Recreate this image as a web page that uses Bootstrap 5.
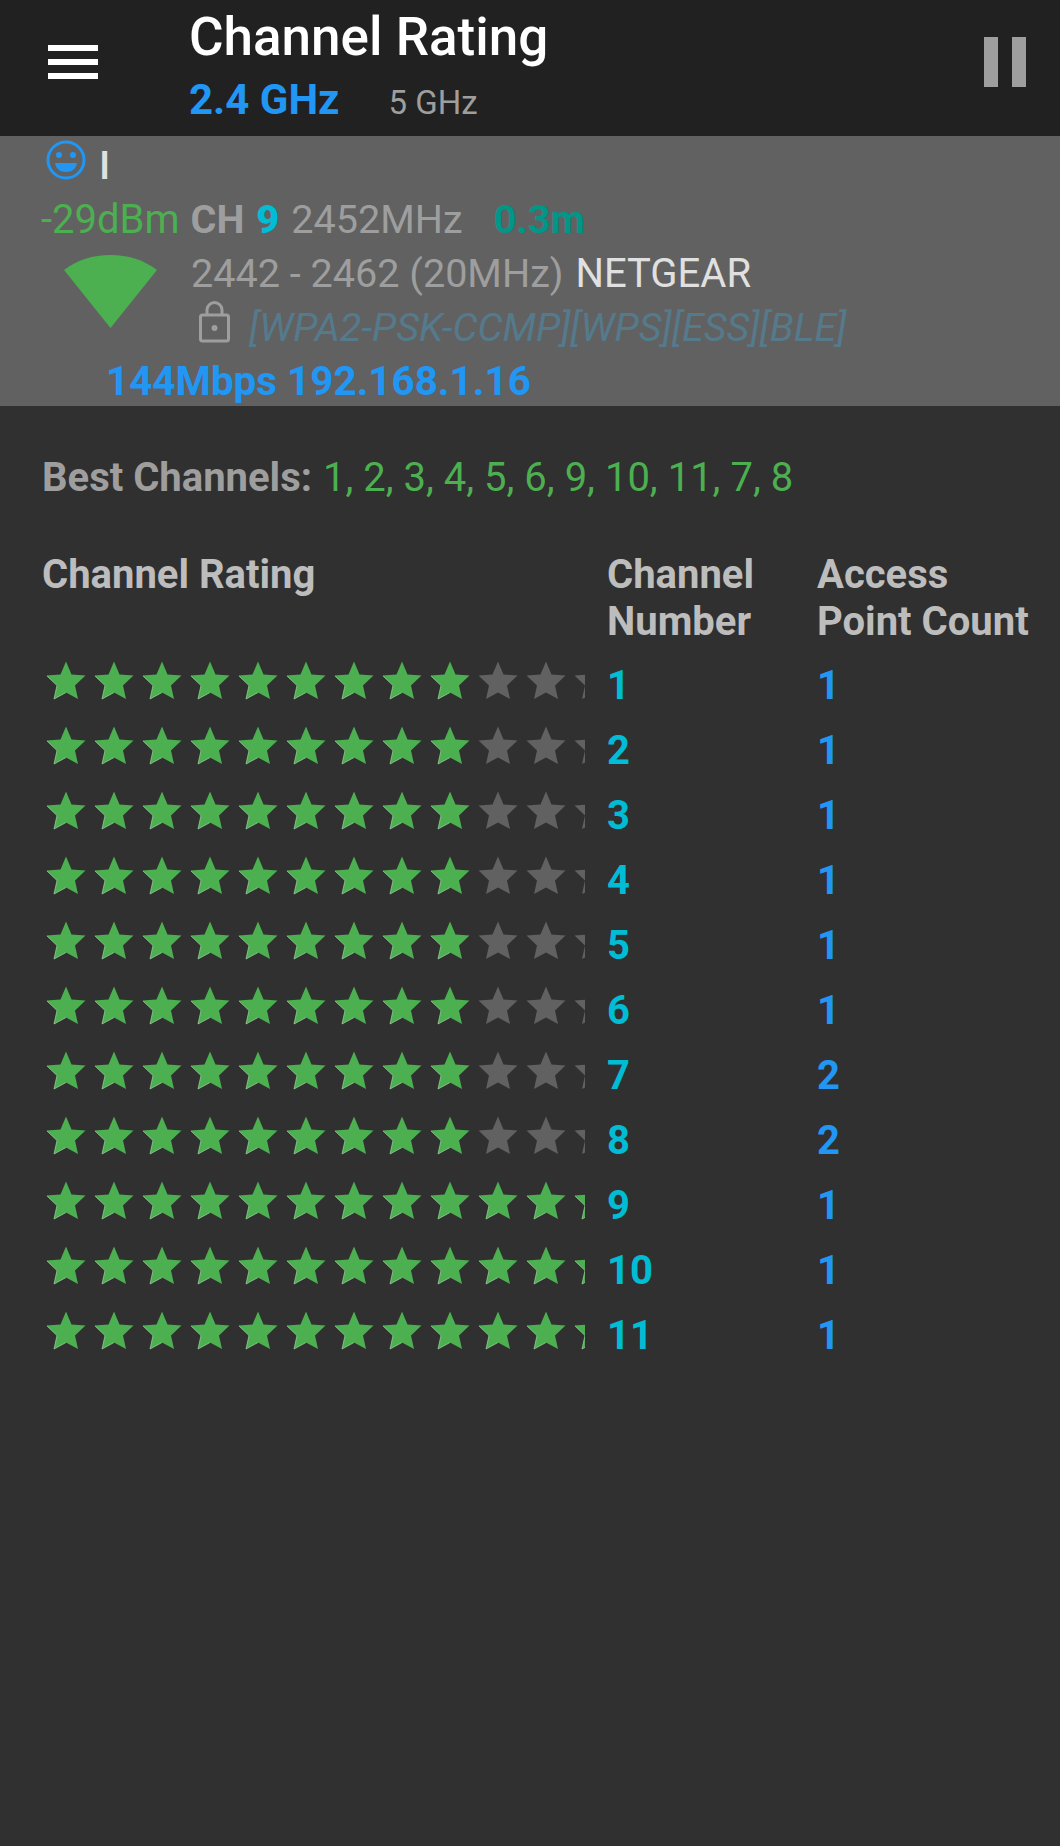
<!DOCTYPE html>
<html lang="en">
<head>
  <meta charset="UTF-8">
  <meta name="viewport" content="width=device-width, initial-scale=1.0">
  <title>Channel Rating</title>
  <link rel="stylesheet" href="https://cdn.jsdelivr.net/npm/bootstrap@5.3.0/dist/css/bootstrap.min.css">
  <style>
    body {
      background-color: #303030;
      font-family: Roboto, "Liberation Sans", sans-serif;
      font-size: 40px;
      line-height: 47px;
      min-height: 1846px;
    }
    .app-bar {
      background-color: #212121;
      height: 136px;
      padding: 0 34px 0 48px;
    }
    .burger { width: 50px; height: 34px; margin: -12px 91px 0 0; }
    .burger span { display: block; height: 6px; background-color: #fff; }
    .title-box { margin-top: 1px; }
    .app-title { color: #fff; font-size: 53px; font-weight: 500; line-height: 72px; }
    .tab-on { color: #2196f3; font-size: 42px; font-weight: 700; line-height: 54px; margin-right: 49px; }
    .tab-off { color: #9e9e9e; font-size: 33px; line-height: 54px; }
    .pause-btn { width: 42px; height: 50px; margin-top: -12px; }
    .pause-btn span { width: 14px; background-color: #9e9e9e; }
    .wifi-panel {
      background-color: #616161;
      height: 270px;
      padding: 3px 0 0 41px;
      color: #9e9e9e;
      font-size: 39.6px;
      line-height: 54px;
    }
    .name-row { height: 54px; padding-left: 4px; }
    .name-row svg { width: 42px; height: 42px; margin-right: 12px; }
    .ssid { color: #e0e0e0; font-weight: 500; }
    .level { color: #4caf50; font-size: 40px; margin-right: 11px; }
    .channel { font-weight: 700; margin-right: 12px; }
    .channel b { color: #00bcd4; margin-left: 2px; }
    .dist { color: #009688; font-weight: 700; margin-left: 31px; }
    .wedge-col { width: 150px; padding-left: 23px; }
    .wedge-col svg { width: 93px; height: 74px; margin-top: 8px; }
    .bssid { color: #e0e0e0; font-size: 40px; margin-left: 2px; }
    .caps { color: #557a8c; font-style: italic; }
    .lock-icon { width: 34px; height: 44px; margin: 0 18px 0 6px; }
    .speed { color: #2196f3; font-size: 40.4px; font-weight: 700; padding-left: 65px; }
    .best { color: #9e9e9e; font-weight: 700; padding: 48px 0 0 42px; }
    .best span { color: #4caf50; font-weight: 400; margin-left: 11px; }
    .rate-wrap { padding: 50px 0 0 42px; }
    .col-rate { width: 565px; flex: none; }
    .col-num { width: 210px; flex: none; }
    .rate-head { color: #bdbdbd; font-weight: 700; }
    .rate-row { height: 65px; }
    .stars { width: 539px; height: 42px; overflow: hidden; flex-wrap: nowrap; gap: 8px; margin: 0 0 10px 4px; }
    .stars svg { width: 40px; height: 40px; flex: none; }
    .star-on { fill: #4caf50; stroke: #a5d6a7; }
    .star-off { fill: #616161; stroke: none; }
    .star-face { stroke: none; }
    .star-edge { fill: none; stroke-width: .7; }
    .num { color: #00bcd4; font-weight: 700; }
    .cnt { color: #2196f3; font-weight: 700; }
  </style>
</head>
<body>
  <svg width="0" height="0" class="d-block">
    <defs>
      <symbol id="star" viewBox="0 0 40 40">
        <polygon class="star-face" points="20,1.500 25.500,14.500 39.500,15.500 29,25.500 32,39 20,32.500 8,39 11,25.500 .5,15.500 14.500,14.500"/>
        <polyline class="star-edge" points="1,16 11,25.500 8,39 20,32.500"/>
      </symbol>
    </defs>
  </svg>

  <div class="app-bar d-flex align-items-center">
    <div class="burger d-flex flex-column justify-content-between">
      <span></span><span></span><span></span>
    </div>
    <div class="title-box flex-grow-1 align-self-start">
      <div class="app-title">Channel Rating</div>
      <div class="d-flex align-items-baseline"><span class="tab-on">2.4 GHz</span><span class="tab-off">5 GHz</span></div>
    </div>
    <div class="pause-btn d-flex justify-content-between"><span></span><span></span></div>
  </div>

  <div class="wifi-panel">
    <div class="name-row d-flex">
      <svg viewBox="0 0 42 42">
        <circle cx="21" cy="21" r="18" fill="none" stroke="#2196f3" stroke-width="3"/>
        <circle cx="14" cy="16" r="3" fill="#2196f3"/>
        <circle cx="28" cy="16" r="3" fill="#2196f3"/>
        <path d="M10 24h22c-1 6-5 9-11 9s-10-3-11-9z" fill="#2196f3"/>
      </svg>
      <span class="ssid">I</span>
    </div>
    <div class="d-flex">
      <span class="level">-29dBm</span>
      <span class="channel">CH <b>9</b></span>
      <span>2452MHz</span>
      <span class="dist">0.3m</span>
    </div>
    <div class="d-flex">
      <div class="wedge-col">
        <svg viewBox="0 0 93 74"><path d="M0 15C13 5 29 0 46.500 0S80 5 93 15L46.500 73z" fill="#4caf50"/></svg>
      </div>
      <div>
        <div>2442 - 2462 (20MHz) <span class="bssid">NETGEAR</span></div>
        <div class="d-flex">
          <svg class="lock-icon" viewBox="0 0 34 44" fill="none" stroke="#9e9e9e" stroke-width="3">
            <rect x="3.500" y="14" width="28" height="26" rx="2"/>
            <path d="M10 14v-5a7.500 7.500 0 0 1 15 0v5"/>
            <circle cx="17.500" cy="27" r="3" fill="#9e9e9e" stroke="none"/>
          </svg>
          <span class="caps">[WPA2-PSK-CCMP][WPS][ESS][BLE]</span>
        </div>
      </div>
    </div>
    <div class="speed">144Mbps 192.168.1.16</div>
  </div>

  <div class="best">Best Channels:<span>1, 2, 3, 4, 5, 6, 9, 10, 11, 7, 8</span></div>

  <div class="rate-wrap">
    <div class="d-flex rate-head mb-2">
      <div class="col-rate">Channel Rating</div>
      <div class="col-num">Channel<br>Number</div>
      <div>Access<br>Point Count</div>
    </div>
    <div id="rows"></div>
  </div>

  <script>
    // channel, access point count, green stars
    const data = [[1,1,9],[2,1,9],[3,1,9],[4,1,9],[5,1,9],[6,1,9],[7,2,9],[8,2,9],[9,1,12],[10,1,12],[11,1,12]];
    document.getElementById('rows').innerHTML = data.map(d => {
      let stars = '';
      for (let i = 0; i < 12; i++) {
        stars += '<svg class="' + (i < d[2] ? 'star-on' : 'star-off') + '"><use href="#star"/></svg>';
      }
      return '<div class="rate-row d-flex align-items-center">' +
        '<div class="col-rate d-flex"><div class="stars d-flex">' + stars + '</div></div>' +
        '<div class="col-num num">' + d[0] + '</div>' +
        '<div class="cnt">' + d[1] + '</div></div>';
    }).join('');
  </script>
  <script src="https://cdn.jsdelivr.net/npm/bootstrap@5.3.0/dist/js/bootstrap.bundle.min.js"></script>
</body>
</html>
